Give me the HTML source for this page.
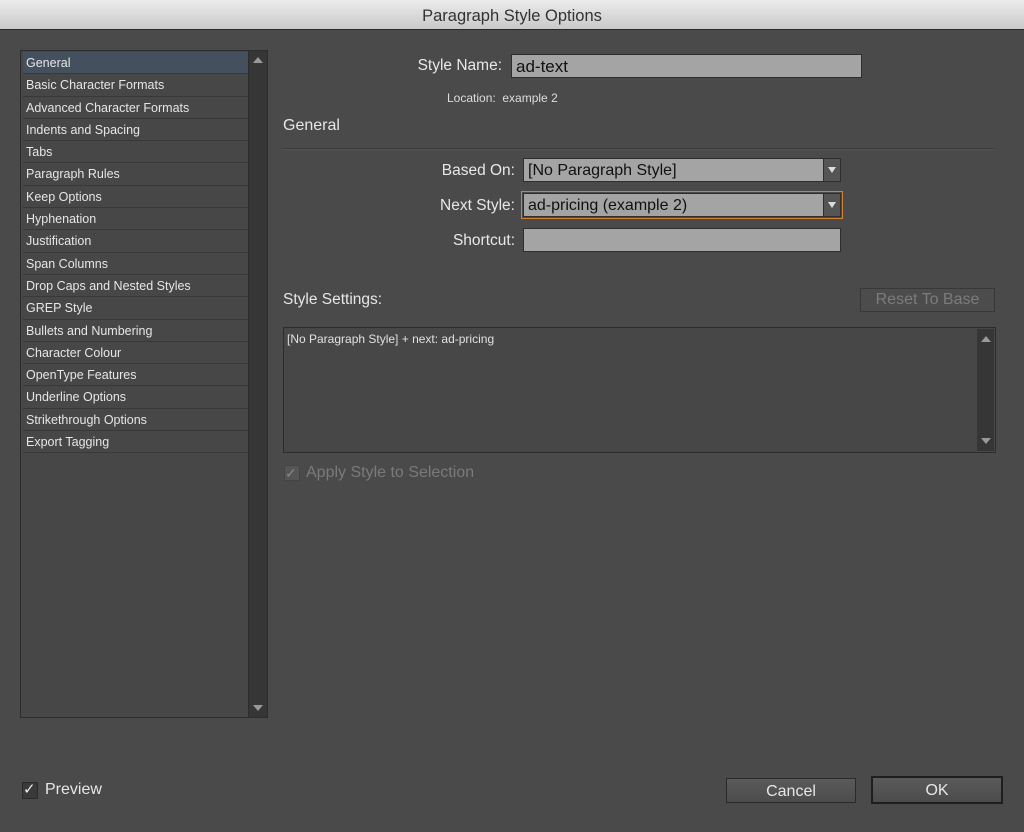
<!DOCTYPE html><html><head><style>
body{margin:0;width:1024px;height:832px;background:#4a4a4a;font-family:"Liberation Sans",sans-serif;position:relative;overflow:hidden;color:#e6e6e6}
.a{position:absolute}
.title{left:0;top:0;width:1024px;height:29px;background:linear-gradient(#ececec,#c9c9c9);border-bottom:1px solid #2a2a2a;text-align:center;font-size:16.5px;line-height:32px;color:#333}
.list{left:20px;top:50px;width:248px;height:668px;background:#474747;border:1px solid #2c2c2c;box-sizing:border-box}
.row{height:22.3px;border-bottom:1px solid #383838;margin-left:2px;width:227px;font-size:12.5px;line-height:22px;padding-left:3px;box-sizing:border-box}
.sb{right:0;top:0;width:18px;height:100%;background:#363636;border-left:1px solid #2c2c2c}
.lbl{font-size:15.5px;text-align:right;color:#e8e8e8}
.inp{background:#a4a4a4;border:1px solid #2e2e2e;box-sizing:border-box;color:#111;font-size:16px;line-height:23px;padding-left:4px}
.dd{position:absolute;right:0;top:0;width:17px;height:100%;background:#555;border-left:1px solid #2e2e2e;box-sizing:border-box}
.dd:after{content:"";position:absolute;left:4px;top:8px;border:4px solid transparent;border-top:6px solid #ddd;border-bottom:0}
.btn{border:1px solid #2a2a2a;background:linear-gradient(#5a5a5a,#4c4c4c);box-sizing:border-box;text-align:center;font-size:16px;color:#e6e6e6}
</style></head><body>
<div class="a title">Paragraph Style Options</div>
<div class="a list">
<div class="row" style="background:#45505e;margin-top:1px">General</div>
<div class="row">Basic Character Formats</div><div class="row">Advanced Character Formats</div><div class="row">Indents and Spacing</div><div class="row">Tabs</div><div class="row">Paragraph Rules</div><div class="row">Keep Options</div><div class="row">Hyphenation</div><div class="row">Justification</div><div class="row">Span Columns</div><div class="row">Drop Caps and Nested Styles</div><div class="row">GREP Style</div><div class="row">Bullets and Numbering</div><div class="row">Character Colour</div><div class="row">OpenType Features</div><div class="row">Underline Options</div><div class="row">Strikethrough Options</div><div class="row">Export Tagging</div>
<div class="a sb"><div class="a" style="left:4px;top:6px;border:5px solid transparent;border-bottom:6px solid #999;border-top:0"></div><div class="a" style="left:4px;bottom:6px;border:5px solid transparent;border-top:6px solid #999;border-bottom:0"></div></div>
</div>
<div class="a lbl" style="left:380px;top:57px;width:122px">Style Name:</div>
<div class="a inp" style="left:511px;top:54px;width:351px;height:24px;font-size:17px">ad-text</div>
<div class="a" style="left:447px;top:91px;font-size:12px;color:#ddd">Location:&nbsp; example 2</div>
<div class="a" style="left:283px;top:117px;font-size:16px">General</div>
<div class="a" style="left:283px;top:148px;width:712px;height:1px;background:#3a3a3a;border-bottom:1px solid #555"></div>
<div class="a lbl" style="left:400px;top:162px;width:115px">Based On:</div>
<div class="a inp" style="left:523px;top:158px;width:318px;height:24px">[No Paragraph Style]<div class="dd"></div></div>
<div class="a lbl" style="left:400px;top:197px;width:115px">Next Style:</div>
<div class="a" style="left:521px;top:191px;width:322px;height:28px;border:1px solid #d08030;box-sizing:border-box"></div>
<div class="a inp" style="left:523px;top:193px;width:318px;height:24px">ad-pricing (example 2)<div class="dd"></div></div>
<div class="a lbl" style="left:400px;top:232px;width:115px">Shortcut:</div>
<div class="a inp" style="left:523px;top:228px;width:318px;height:24px"></div>
<div class="a" style="left:283px;top:291px;font-size:15.5px">Style Settings:</div>
<div class="a btn" style="left:860px;top:288px;width:135px;height:24px;color:#7c7c7c;line-height:22px;background:#4c4c4c;border-color:#383838">Reset To Base</div>
<div class="a" style="left:283px;top:327px;width:713px;height:126px;border:1px solid #2c2c2c;background:#474747;box-sizing:border-box">
<div class="a" style="left:3px;top:4px;font-size:12px;color:#e0e0e0">[No Paragraph Style] + next: ad-pricing</div>
<div class="a" style="right:1px;top:1px;width:17px;height:122px;background:#363636"><div class="a" style="left:4px;top:7px;border:5px solid transparent;border-bottom:6px solid #999;border-top:0"></div><div class="a" style="left:4px;bottom:7px;border:5px solid transparent;border-top:6px solid #999;border-bottom:0"></div></div>
</div>
<div class="a" style="left:284px;top:465px;width:14px;height:14px;background:#555;border:1px solid #444;color:#888;font-size:14px;line-height:14px">✓</div>
<div class="a" style="left:306px;top:464px;font-size:16px;color:#7a7a7a">Apply Style to Selection</div>
<div class="a" style="left:22px;top:782px;width:14px;height:15px;background:#3a3a3a;border:1px solid #2a2a2a;color:#eee;font-size:15px;line-height:14px">✓</div>
<div class="a" style="left:45px;top:781px;font-size:16px">Preview</div>
<div class="a btn" style="left:726px;top:778px;width:130px;height:25px;line-height:25px">Cancel</div>
<div class="a btn" style="left:871px;top:776px;width:132px;height:28px;line-height:26px;border:2px solid #1e1e1e">OK</div>
</body></html>
